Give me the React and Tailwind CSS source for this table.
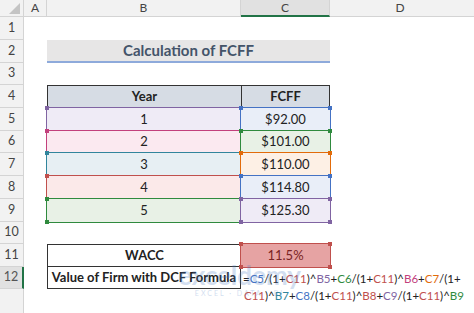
const font = "font-['Lato','Open_Sans',sans-serif]";

const rowHeaders = ["1", "2", "3", "4", "5", "6", "7", "8", "9", "10", "11", "12"];

const dataRows = [
  {
    row: "row-start-6",
    year: "1",
    fcff: "$92.00",
    b: { line: "border-[#8064a2]", dot: "bg-[#8064a2]", fill: "bg-[#efebf6]" },
    c: { line: "border-[#4472c4]", dot: "bg-[#4472c4]", fill: "bg-[#e9eef8]" },
  },
  {
    row: "row-start-7",
    year: "2",
    fcff: "$101.00",
    b: { line: "border-[#c2407c]", dot: "bg-[#c2407c]", fill: "bg-[#fbe9f0]" },
    c: { line: "border-[#2f8a3e]", dot: "bg-[#2f8a3e]", fill: "bg-[#e8f1e6]" },
  },
  {
    row: "row-start-8",
    year: "3",
    fcff: "$110.00",
    b: { line: "border-[#31859c]", dot: "bg-[#31859c]", fill: "bg-[#e7eff3]" },
    c: { line: "border-[#e26b0a]", dot: "bg-[#e26b0a]", fill: "bg-[#fdf0e5]" },
  },
  {
    row: "row-start-9",
    year: "4",
    fcff: "$114.80",
    b: { line: "border-[#c0504d]", dot: "bg-[#c0504d]", fill: "bg-[#fbe9e9]" },
    c: { line: "border-[#4472c4]", dot: "bg-[#4472c4]", fill: "bg-[#e9eef8]" },
  },
  {
    row: "row-start-10",
    year: "5",
    fcff: "$125.30",
    b: { line: "border-[#2f8a3e]", dot: "bg-[#2f8a3e]", fill: "bg-[#e8f1e6]" },
    c: { line: "border-[#8064a2]", dot: "bg-[#8064a2]", fill: "bg-[#efebf6]" },
  },
];

// Excel-style highlighted reference cell with corner handles
function RefCell({ tone, className, children }) {
  return (
    <div className={`relative flex items-center justify-center ${tone.fill} ${className}`}>
      <span>{children}</span>
      <div className={`pointer-events-none absolute -inset-px border-[1.5px] ${tone.line}`} />
      <div className={`absolute -left-[2px] -top-[2px] size-[4px] ${tone.dot}`} />
      <div className={`absolute -right-[2px] -top-[2px] size-[4px] ${tone.dot}`} />
      <div className={`absolute -left-[2px] -bottom-[2px] size-[4px] ${tone.dot}`} />
      <div className={`absolute -right-[2px] -bottom-[2px] size-[4px] ${tone.dot}`} />
    </div>
  );
}

const line1 = [
  ["=", "text-[#222]"],
  ["C5", "text-[#4472c4]"],
  ["/(1+", "text-[#222]"],
  ["C11", "text-[#c0504d]"],
  [")^", "text-[#222]"],
  ["B5", "text-[#8064a2]"],
  ["+", "text-[#222]"],
  ["C6", "text-[#2f8a3e]"],
  ["/(1+", "text-[#222]"],
  ["C11", "text-[#c0504d]"],
  [")^", "text-[#222]"],
  ["B6", "text-[#c2407c]"],
  ["+", "text-[#222]"],
  ["C7", "text-[#e26b0a]"],
  ["/(1+", "text-[#222]"],
];

const line2 = [
  ["C11", "text-[#c0504d]"],
  [")^", "text-[#222]"],
  ["B7", "text-[#31859c]"],
  ["+", "text-[#222]"],
  ["C8", "text-[#4472c4]"],
  ["/(1+", "text-[#222]"],
  ["C11", "text-[#c0504d]"],
  [")^", "text-[#222]"],
  ["B8", "text-[#c0504d]"],
  ["+", "text-[#222]"],
  ["C9", "text-[#8064a2]"],
  ["/(1+", "text-[#222]"],
  ["C11", "text-[#c0504d]"],
  [")^", "text-[#222]"],
  ["B9", "text-[#2f8a3e]"],
];

const App = () => {
  return (
    <div className={`relative h-[313px] w-[474px] overflow-hidden bg-white text-[13px] text-[#222] ${font}`}>
      <div className="grid h-full grid-cols-[24px_23px_194px_89px_1fr] grid-rows-[17px_23px_23px_22px_23px_23px_22px_23px_23px_23px_22px_23px_22px_1fr]">
        {/* Column headers */}
        <div className="col-start-1 row-start-1 flex items-end justify-end border-b border-r border-[#d4d4d4] bg-[#f2f2f2] pb-[2px] pr-[3px]">
          <svg width="11" height="11" viewBox="0 0 11 11">
            <path d="M11 0 L11 11 L0 11 Z" fill="#c4c4c4" />
          </svg>
        </div>
        <div className="col-start-2 row-start-1 flex items-center justify-center border-b border-r border-[#d4d4d4] bg-[#f2f2f2] text-[12px] text-[#444]">A</div>
        <div className="col-start-3 row-start-1 flex items-center justify-center border-b border-r border-[#d4d4d4] bg-[#f2f2f2] text-[12px] text-[#444]">B</div>
        <div className="col-start-4 row-start-1 flex items-center justify-center border-b-2 border-r border-b-[#217346] border-r-[#d4d4d4] bg-[#e1e1e1] text-[12px] text-[#444]">C</div>
        <div className="col-start-5 row-start-1 flex items-center justify-center border-b border-[#d4d4d4] bg-[#f2f2f2] pr-[4px] text-[12px] text-[#444]">D</div>

        {/* Row headers */}
        {rowHeaders.map((n, i) => (
          <div
            key={n}
            style={{ gridRowStart: i + 2 }}
            className={`col-start-1 flex items-center justify-center border-b text-[12.5px] ${
              n === "12"
                ? "border-b-[#d4d4d4] border-r-2 border-r-[#217346] bg-[#e1e1e1] text-[#555]"
                : "border-r border-[#d4d4d4] bg-[#f2f2f2] text-[#444]"
            }`}
          >
            {n}
          </div>
        ))}
        <div className="col-start-1 row-start-14 border-r border-[#d4d4d4] bg-[#f2f2f2]" />

        {/* Title */}
        <div className="col-span-2 col-start-3 row-start-3 flex items-center justify-center border-b-2 border-[#8eaadb] bg-[#e7e6e6] text-[15px] font-bold text-[#44546a]">
          Calculation of FCFF
        </div>

        {/* Table header */}
        <div className="col-start-3 row-start-5 flex items-center justify-center border border-r-0 border-[#333] bg-[#d6dce4] font-bold">Year</div>
        <div className="col-start-4 row-start-5 flex items-center justify-center border border-[#333] bg-[#d6dce4] font-bold">FCFF</div>

        {dataRows.map((r) => (
          <div key={r.year} className="contents">
            <RefCell tone={r.b} className={`col-start-3 ${r.row}`}>{r.year}</RefCell>
            <RefCell tone={r.c} className={`col-start-4 ${r.row}`}>{r.fcff}</RefCell>
          </div>
        ))}

        {/* WACC and value */}
        <div className="col-start-3 row-start-12 flex items-center justify-center border border-r-0 border-[#333] font-bold">WACC</div>
        <RefCell
          tone={{ line: "border-[#c0504d]", dot: "bg-[#c0504d]", fill: "bg-[#e6a3a3]" }}
          className="col-start-4 row-start-12 text-[#7a2424]"
        >
          11.5%
        </RefCell>
        <div className="col-start-3 row-start-13 flex items-center justify-center border border-t-0 border-[#333] font-bold">
          Value of Firm with DCF Formula
        </div>
        <div className="col-span-2 col-start-4 row-span-2 row-start-13 flex flex-col pl-[2px] pt-[3px] text-[11.5px] leading-[17px]">
          <span className="whitespace-nowrap">
            {line1.map(([t, c], i) => (
              <span key={i} className={c}>{t}</span>
            ))}
          </span>
          <span className="whitespace-nowrap pl-[1px]">
            {line2.map(([t, c], i) => (
              <span key={i} className={c}>{t}</span>
            ))}
          </span>
        </div>
      </div>

      {/* faint watermark */}
      <div className="pointer-events-none absolute left-[178px] top-[262px] flex flex-col items-center opacity-25">
        <span className="text-[26px] font-bold leading-[26px] text-[#4f7fc4]">exceldemy</span>
        <span className="text-[7px] tracking-[2px] text-[#4f7fc4]">EXCEL · DATA · BI</span>
      </div>
    </div>
  );
};

export default App;
